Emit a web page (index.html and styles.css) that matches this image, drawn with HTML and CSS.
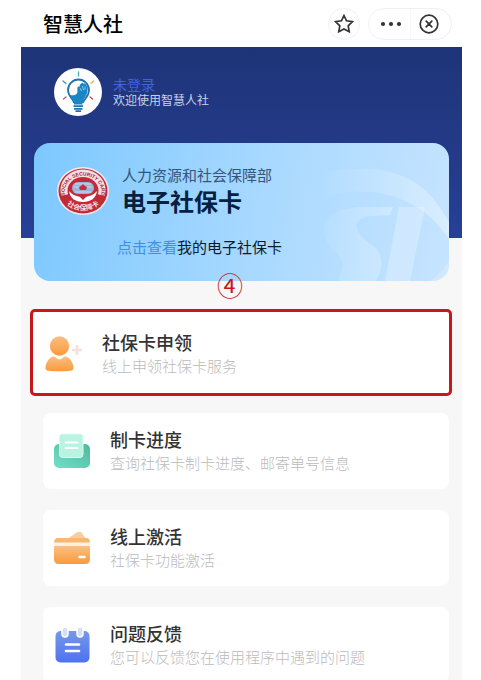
FILE: index.html
```html
<!DOCTYPE html>
<html lang="zh-CN">
<head>
    <meta charset="UTF-8">
    <meta name="viewport" content="width=device-width, initial-scale=1.0">
    <title>智慧人社</title>
    <link rel="stylesheet" href="styles.css">
</head>
<body>
    <div class="app">
        <header class="topbar">
            <h1>智慧人社</h1>
            <button class="round-btn" type="button" aria-label="收藏">
                <svg width="20" height="20" viewBox="0 0 20 20" fill="none" stroke="#333" stroke-width="1.7" stroke-linejoin="miter">
                    <path d="M10 1.500l2.500 5.300 6 .8-4.300 4.200 1 6L10 15l-5.200 2.800 1-6L1.500 7.600l6-.8z"/>
                </svg>
            </button>
            <div class="capsule">
                <button type="button" aria-label="更多">
                    <svg width="22" height="20" viewBox="0 0 22 20" fill="#333">
                        <circle cx="3" cy="10" r="2.1"/>
                        <circle cx="11" cy="10" r="2.1"/>
                        <circle cx="19" cy="10" r="2.1"/>
                    </svg>
                </button>
                <button type="button" aria-label="关闭">
                    <svg width="20" height="20" viewBox="0 0 20 20" fill="none" stroke="#333" stroke-width="1.7" stroke-linecap="round">
                        <circle cx="10" cy="10" r="8.800"/>
                        <path d="M7.200 7.200l5.600 5.600M12.800 7.200l-5.600 5.600"/>
                    </svg>
                </button>
            </div>
        </header>

        <section class="hero">
            <div class="user">
                <svg class="avatar" width="48" height="48" viewBox="0 0 48 48">
                    <circle cx="24" cy="24" r="24" fill="#fff"/>
                    <g fill="none" stroke-width="1.3" stroke-linecap="round">
                        <path d="M24.500 4v4" stroke="#3db6b0"/>
                        <path d="M9 13l3 2.500" stroke="#3a9bb5"/>
                        <path d="M39.500 13l-2.500 2.500" stroke="#e0b04a"/>
                        <path d="M9.500 31l2.500-2" stroke="#c0507a"/>
                        <path d="M38.500 31l-2.500-2" stroke="#d2483c"/>
                    </g>
                    <path d="M20 35c0-4-6-6-6-13a10.500 10.500 0 0 1 21 0c0 7-5.500 9-6 13" fill="#fff" stroke="#1f74ad" stroke-width="1.800"/>
                    <path d="M20 36.500c0-4-3.500-6.500-5-10 3 1.500 6 1 8-1 1-2 0-4 .5-6 .3-1.500 1.500-1 2-.5 0-2 .5-3.500 1.500-3 .5-1.500 2-1.500 2.500-.2 1-.8 2.500-.2 2.500 1.200 1.500.5 2 2.500 1.500 5.500-.5 6-5 8-5 14z" fill="#1b86c6"/>
                    <path d="M26 20l1.500 3M28.500 18l1 4M31 18.500v3.500" stroke="#9fd4f0" stroke-width=".8"/>
                    <path d="M19.500 38.200h9.500M20 40.800h8.500M21.500 43.200h5.500" stroke="#1f74ad" stroke-width="1.700"/>
                </svg>
                <div class="user-text">
                    <a class="login" href="#login">未登录</a>
                    <span>欢迎使用智慧人社</span>
                </div>
            </div>

            <div class="social-card">
                <!-- pale logo in the card's right corner -->
                <svg class="watermark" width="140" height="138" viewBox="0 0 140 138">
                    <defs>
                        <linearGradient id="fade" x1="0" x2="1">
                            <stop offset="0" stop-color="#fff" stop-opacity="0"/>
                            <stop offset=".5" stop-color="#fff" stop-opacity=".16"/>
                            <stop offset="1" stop-color="#fff" stop-opacity=".36"/>
                        </linearGradient>
                        <linearGradient id="fade-s" x1="0" x2="1">
                            <stop offset="0" stop-color="#fff" stop-opacity=".06"/>
                            <stop offset="1" stop-color="#fff" stop-opacity=".28"/>
                        </linearGradient>
                    </defs>
                    <path d="M8 31C40 23 75 23 102 37c16 9 28 24 38 42v17c-12-18-27-31-44-38C68 46 38 45 8 58z" fill="url(#fade)"/>
                    <path d="M84 64H54C26 64 12 76 15 91c3 17 22 21 18 33-1 5-2 8-4 14h38c8-14 8-28-5-37-20-13-19-27 1-28l18-1z" fill="url(#fade-s)"/>
                    <path d="M90 64h26l-15 74H76z" fill="#fff" fill-opacity=".26"/>
                    <path d="M140 118c-5 8-11 14-19 20h19z" fill="#fff" fill-opacity=".2"/>
                </svg>
                <div class="card-head">
                    <svg class="emblem" width="52" height="48" viewBox="0 0 52 48">
                        <defs>
                            <path id="arc-top" d="M8.500 31A18.500 17 0 1 1 43.500 31"/>
                            <path id="arc-bottom" d="M4 28A22.500 19.500 0 0 0 48 28"/>
                        </defs>
                        <ellipse cx="26" cy="24" rx="26" ry="24" fill="#f6e9ec"/>
                        <ellipse cx="26" cy="24" rx="24.500" ry="22.500" fill="#c32a38"/>
                        <path d="M4.500 29A22.500 20.500 0 1 1 47.500 29L40 27H12z" fill="#f3dfe4"/>
                        <ellipse cx="26" cy="23.500" rx="15.500" ry="13.500" fill="#c32a38"/>
                        <path d="M12 24c3 4 8 5 11 6l3 3 3-3c3-1 8-2 11-6-1 7-6 11-14 11s-13-4-14-11z" fill="#fff"/>
                        <rect x="15" y="15" width="22" height="12" rx="6" fill="#9db4d8"/>
                        <path d="M18 17h16M17 20h18M18 25h16" stroke="#d4e0f2" stroke-width=".8"/>
                        <path d="M26 17l2 2 2 1-1 3h-6l-1-3 2-1z" fill="#d0263a"/>
                        <text class="seal-en"><textPath href="#arc-top" startOffset="50%">SOCIAL SECURITY CARD</textPath></text>
                        <text class="seal-cn"><textPath href="#arc-bottom" startOffset="50%">社会保障卡</textPath></text>
                    </svg>
                    <div>
                        <p class="dept">人力资源和社会保障部</p>
                        <h2>电子社保卡</h2>
                    </div>
                </div>
                <p class="card-link"><a href="#card">点击查看</a>我的电子社保卡</p>
            </div>
        </section>

        <nav class="menu">
            <a class="item active" href="#apply">
                <span class="step">④</span>
                <svg width="38" height="36" viewBox="0 0 38 36">
                    <defs>
                        <linearGradient id="orange" x1="0" y1="0" x2="0" y2="1">
                            <stop offset="0" stop-color="#fbbf83"/>
                            <stop offset="1" stop-color="#f99a3c"/>
                        </linearGradient>
                    </defs>
                    <circle cx="14.500" cy="10" r="9.700" fill="url(#orange)"/>
                    <path d="M9 20.500c1.500 0 3 3 5.500 3s4-3 5.500-3c5 0 8.500 7 8.500 11.500 0 2-1.500 2.500-3 2.700-7 .8-15 .8-22 0C1.800 34.500.5 34 .5 32 .5 27.500 4 20.500 9 20.500z" fill="url(#orange)"/>
                    <path d="M32 9v10M27 14h10" stroke="#f7dfdb" stroke-width="2.600"/>
                </svg>
                <div>
                    <h3>社保卡申领</h3>
                    <p>线上申领社保卡服务</p>
                </div>
            </a>
            <a class="item" href="#progress">
                <svg width="38" height="36" viewBox="0 0 38 36">
                    <defs>
                        <linearGradient id="green" x1="0" y1="1" x2="1" y2="0">
                            <stop offset="0" stop-color="#74dfc5"/>
                            <stop offset="1" stop-color="#4fb99f"/>
                        </linearGradient>
                    </defs>
                    <rect x="1" y="11" width="36" height="24" rx="5" fill="url(#green)"/>
                    <path d="M9 1h18q3 0 3 3v17q0 3.500-3 3.500H9.500q-3 0-3-3V4q0-3 2.500-3z" fill="#b9f3e1" stroke="#d9fbf1" stroke-width="1"/>
                    <path d="M12.500 9.500h12M12.500 15h12" stroke="#fff" stroke-width="2" stroke-linecap="round"/>
                </svg>
                <div>
                    <h3>制卡进度</h3>
                    <p>查询社保卡制卡进度、邮寄单号信息</p>
                </div>
            </a>
            <a class="item" href="#activate">
                <svg width="38" height="36" viewBox="0 0 38 36">
                    <path d="M14 9L23 3q4-2.500 6 0l4 6z" fill="#f8cda2"/>
                    <path d="M1 13q0-5 4-5h28q4 0 4 5z" fill="#fbb76e"/>
                    <path d="M1 16h36v13q0 5-5 5H6q-5 0-5-5z" fill="url(#orange)"/>
                    <path d="M1 12.500h36v3.500H1z" fill="#fff2e0"/>
                    <path d="M26.500 27h5" stroke="#fff" stroke-width="2.600" stroke-linecap="round"/>
                </svg>
                <div>
                    <h3>线上激活</h3>
                    <p>社保卡功能激活</p>
                </div>
            </a>
            <a class="item" href="#feedback">
                <svg width="38" height="36" viewBox="0 0 38 36">
                    <defs>
                        <linearGradient id="blue" x1="0" y1="0" x2="0" y2="1">
                            <stop offset="0" stop-color="#7798ea"/>
                            <stop offset="1" stop-color="#4d72ee"/>
                        </linearGradient>
                    </defs>
                    <rect x="2.500" y="4" width="34" height="31.500" rx="5" fill="url(#blue)"/>
                    <path d="M12 4v3M27 4v3" stroke="#fff" stroke-width="7.500" stroke-linecap="round"/>
                    <path d="M12 3v4M27 3v4" stroke="#d3def8" stroke-width="4.500" stroke-linecap="round"/>
                    <path d="M13 17.500h13M13 24h13" stroke="#fff" stroke-width="2.600" stroke-linecap="round"/>
                </svg>
                <div>
                    <h3>问题反馈</h3>
                    <p>您可以反馈您在使用程序中遇到的问题</p>
                </div>
            </a>
        </nav>
    </div>
</body>
</html>
```
FILE: styles.css
```css
* {
    box-sizing: border-box;
}

body {
    margin: 0;
    background-color: #ffffff;
    font-family: "Noto Sans CJK SC", "Noto Sans", sans-serif;
    color: #333;
}

h1, h2, h3, p {
    margin: 0;
}

a {
    text-decoration: none;
}

svg {
    display: block;
    flex-shrink: 0;
}

.app {
    margin: 0 19px 0 21px;
    background-color: #f7f7f7;
}

/* top bar */
.topbar {
    display: flex;
    align-items: center;
    height: 47px;
    padding: 0 10px 0 22px;
    background-color: #fff;
}

.topbar h1 {
    flex: 1;
    font-size: 20px;
    line-height: 30px;
    font-weight: 500;
    color: #000;
}

.topbar button {
    display: flex;
    align-items: center;
    justify-content: center;
    padding: 0;
    background: none;
    border: none;
    cursor: pointer;
}

.topbar .round-btn {
    width: 32px;
    height: 32px;
    margin-right: 8px;
    border: 1px solid #f0f0f0;
    border-radius: 50%;
}

.capsule {
    display: flex;
    width: 84px;
    height: 32px;
    padding: 0 3px;
    border: 1px solid #f0f0f0;
    border-radius: 16px;
}

.capsule button {
    flex: 1;
}

.capsule button + button {
    border-left: 1px solid #f7f7f7;
}

/* blue area, the card hangs over its lower edge */
.hero {
    padding: 21px 13px 0;
    background: linear-gradient(#1e3478, #273f96) no-repeat;
    background-size: 100% 191px;
}

.user {
    display: flex;
    align-items: center;
    gap: 11px;
    padding-left: 20px;
    margin-bottom: 27px;
}

.user-text {
    display: flex;
    flex-direction: column;
    font-size: 12px;
    line-height: 16px;
    color: #c9d1e8;
}

.user-text .login {
    font-size: 14px;
    color: #3f62e0;
}

.social-card {
    position: relative;
    padding: 22px 23px 23px;
    border-radius: 16px;
    overflow: hidden;
    background: linear-gradient(100deg, #7cc8ff, #a9d9ff 55%, #c6e4ff);
}

.watermark {
    position: absolute;
    right: 0;
    bottom: 0;
}

.card-head {
    display: flex;
    align-items: center;
    gap: 13px;
}

.seal-en {
    font-family: "Liberation Sans", sans-serif;
    font-size: 5px;
    font-weight: bold;
    fill: #a3242f;
    text-anchor: middle;
}

.seal-cn {
    font-size: 7px;
    font-weight: bold;
    fill: #f6dfe2;
    text-anchor: middle;
}

.dept {
    font-size: 15px;
    line-height: 20px;
    color: #35557a;
}

.social-card h2 {
    font-size: 24px;
    line-height: 32px;
    font-weight: 700;
    color: #06203f;
}

.card-link {
    margin-top: 19px;
    padding-left: 60px;
    font-size: 15px;
    line-height: 22px;
    color: #0b1a2c;
}

.card-link a {
    color: #3f8fe6;
}

/* service list */
.menu {
    display: flex;
    flex-direction: column;
    gap: 21px;
    padding-top: 28px;
}

.item {
    display: flex;
    align-items: center;
    gap: 19px;
    margin: 0 13px 0 22px;
    padding: 14px 10px;
    border-radius: 8px;
    background-color: #fff;
    color: #333;
}

.item h3 {
    font-size: 18px;
    line-height: 24px;
    font-weight: 500;
}

.item p {
    font-size: 15px;
    line-height: 24px;
    font-weight: 300;
    color: #bbb;
}

.item.active {
    position: relative;
    margin: 0 10px -4px 9px;
    padding: 18px 12px 15px;
    border: 3px solid #c8161d;
    border-radius: 5px;
}

.step {
    position: absolute;
    top: -42px;
    left: 184px;
    font-size: 26px;
    line-height: 30px;
    font-weight: 400;
    color: #c8161d;
}
```
